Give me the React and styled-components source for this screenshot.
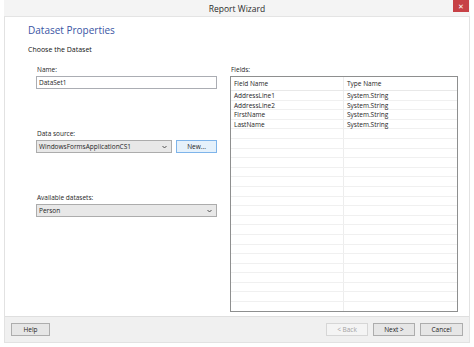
import React from 'react';
import styled, { createGlobalStyle } from 'styled-components';

const Global = createGlobalStyle`
  html, body {
    margin: 0;
    padding: 0;
    background: #ffffff;
  }
  body {
    font-family: "Open Sans", "Noto Sans", sans-serif;
    color: #1e1e1e;
  }
`;

const Window = styled.div`
  width: 474px;
  height: 347px;
  display: flex;
  flex-direction: column;
  background: #ffffff;
  box-sizing: border-box;
`;

const TitleBar = styled.div`
  position: relative;
  height: 17px;
  background: #f4f4f4;
  display: flex;
  align-items: center;
  justify-content: center;
  font-size: 8.5px;
  color: #2b2b2b;
  border-bottom: 1px solid #e4e4e4;
  margin: 0 4px 0 4px;
  box-sizing: border-box;
`;

const CloseButton = styled.div`
  position: absolute;
  top: 0;
  right: 1px;
  width: 16px;
  height: 12px;
  background: #c74146;
  color: #fff;
  font-size: 7px;
  display: flex;
  align-items: center;
  justify-content: center;
`;

const Frame = styled.div`
  flex: 1;
  display: flex;
  flex-direction: column;
  margin: 0 4px 4px 4px;
  border-left: 1px solid #e2e2e2;
  border-right: 1px solid #e2e2e2;
  border-bottom: 1px solid #e2e2e2;
`;

const Content = styled.div`
  flex: 1;
  padding: 6px 0 0 23px;
`;

const Heading = styled.div`
  font-size: 10px;
  color: #3a55a4;
  line-height: 14px;
`;

const Sub = styled.div`
  font-size: 7px;
  margin-top: 8px;
  line-height: 10px;
  color: #111;
`;

const Columns = styled.div`
  display: flex;
  margin-top: 10px;
  padding-left: 8px;
`;

const LeftCol = styled.div`
  width: 181px;
  display: flex;
  flex-direction: column;
`;

const RightCol = styled.div`
  margin-left: 13px;
  width: 228px;
  display: flex;
  flex-direction: column;
`;

const Label = styled.div`
  font-size: 6.5px;
  line-height: 9px;
  height: 9px;
  margin-top: ${p => p.$top || 0}px;
  margin-left: 1px;
  margin-bottom: 2px;
`;

const TextBox = styled.div`
  height: 11px;
  border: 1px solid #abadb3;
  font-size: 6.5px;
  line-height: 11px;
  padding-left: 2px;
`;

const Row = styled.div`
  display: flex;
  gap: 4px;
`;

const Select = styled.div`
  flex: ${p => (p.$grow ? 1 : 'none')};
  height: 11px;
  border: 1px solid #acacac;
  background: #e8e8e8;
  font-size: 6.5px;
  line-height: 11px;
  padding: 0 4px 0 2px;
  display: flex;
  align-items: center;
  justify-content: space-between;
`;

const Button = styled.div`
  width: ${p => p.$w || 39}px;
  height: 11px;
  box-sizing: content-box;
  border: 1px solid ${p => (p.$focus ? '#7eb4ea' : p.$disabled ? '#d6d6d6' : '#adadad')};
  background: ${p => (p.$focus ? '#e5f1fb' : p.$disabled ? '#f4f4f4' : '#e6e6e6')};
  color: ${p => (p.$disabled ? '#a3a3a3' : '#1e1e1e')};
  font-size: 6.5px;
  line-height: 11px;
  text-align: center;
`;

const Grid = styled.div`
  height: 236px;
  border: 1px solid #8e8f8f;
  box-sizing: border-box;
  overflow: hidden;
`;

const GridRow = styled.div`
  display: grid;
  grid-template-columns: 113px 1fr;
  height: ${p => (p.$head ? 14 : 9.6)}px;
  border-bottom: 1px solid ${p => (p.$head ? '#e8e8e8' : '#f0f0f0')};
  box-sizing: border-box;
  font-size: 6.5px;
  line-height: ${p => (p.$head ? 13 : 9)}px;
`;

const Cell = styled.div`
  padding-left: 3px;
  border-right: ${p => (p.$first ? '1px solid #ededed' : 'none')};
  white-space: nowrap;
`;

const Footer = styled.div`
  height: 25px;
  background: #f0f0f0;
  border-top: 1px solid #dfdfdf;
  display: flex;
  align-items: center;
  padding: 0 6px 0 6px;
  gap: 5px;
`;

const Spacer = styled.div`
  flex: 1;
`;

const Chevron = () => (
  <svg width="5" height="4" viewBox="0 0 5 4">
    <path d="M0.5 1 L2.5 3 L4.5 1" fill="none" stroke="#444" strokeWidth="0.9" />
  </svg>
);

const fields = [
  ['AddressLine1', 'System.String'],
  ['AddressLine2', 'System.String'],
  ['FirstName', 'System.String'],
  ['LastName', 'System.String'],
];

export default function App() {
  const empty = Array.from({ length: 20 });
  return (
    <Window>
      <Global />
      <TitleBar>
        Report Wizard
        <CloseButton>✕</CloseButton>
      </TitleBar>
      <Frame>
        <Content>
          <Heading>Dataset Properties</Heading>
          <Sub>Choose the Dataset</Sub>
          <Columns>
            <LeftCol>
              <Label>Name:</Label>
              <TextBox>DataSet1</TextBox>
              <Label $top={40}>Data source:</Label>
              <Row>
                <Select $grow>
                  WindowsFormsApplicationCS1
                  <Chevron />
                </Select>
                <Button $focus>New...</Button>
              </Row>
              <Label $top={40}>Available datasets:</Label>
              <Select>
                Person
                <Chevron />
              </Select>
            </LeftCol>
            <RightCol>
              <Label>Fields:</Label>
              <Grid>
                <GridRow $head>
                  <Cell $first>Field Name</Cell>
                  <Cell>Type Name</Cell>
                </GridRow>
                {fields.map(([n, t]) => (
                  <GridRow key={n}>
                    <Cell $first>{n}</Cell>
                    <Cell>{t}</Cell>
                  </GridRow>
                ))}
                {empty.map((_, i) => (
                  <GridRow key={i}>
                    <Cell $first />
                    <Cell />
                  </GridRow>
                ))}
              </Grid>
            </RightCol>
          </Columns>
        </Content>
        <Footer>
          <Button $w={37}>Help</Button>
          <Spacer />
          <Button $w={40} $disabled>&lt; Back</Button>
          <Button $w={40}>Next &gt;</Button>
          <Button $w={41}>Cancel</Button>
        </Footer>
      </Frame>
    </Window>
  );
}
